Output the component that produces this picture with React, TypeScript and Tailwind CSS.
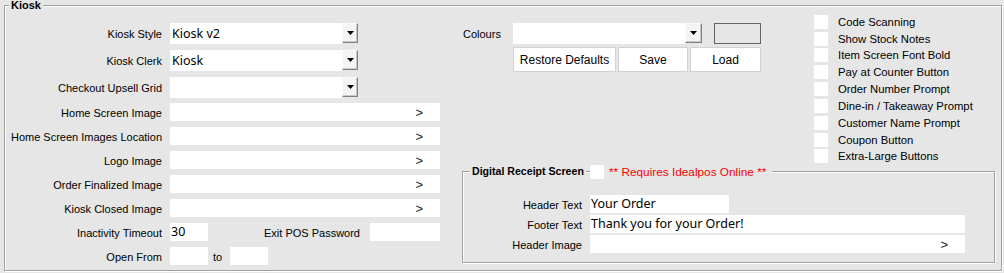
import React from "react";

const LBL = "font-['Liberation_Sans',Arial,sans-serif] text-[11px] leading-none text-black";
const INP = "font-['Noto_Sans',sans-serif] text-[12.5px] leading-none text-black";

function DropBtn({ w }: { w: string }) {
  return (
    <div
      className={`${w} h-[20px] bg-[#f4f4f4] border border-t-[#fcfcfc] border-l-[#fcfcfc] border-r-[#808080] border-b-[#808080] shadow-[inset_-1px_-1px_0_#c8c8c8] flex items-center justify-center`}
    >
      <svg width="7" height="4" viewBox="0 0 7 4">
        <path d="M0 0H7L3.5 4Z" fill="#000" />
      </svg>
    </div>
  );
}

function Select({ value, w, bw }: { value?: string; w: string; bw: string }) {
  return (
    <div className="flex items-start h-[21px]">
      <div className={`${w} h-[21px] bg-white flex items-center pl-[2px] pt-[1px] ${INP}`}>{value}</div>
      <DropBtn w={bw} />
    </div>
  );
}

function PathField({ w }: { w: string }) {
  return (
    <div
      className={`${w} h-[18px] bg-white flex items-center justify-end pr-[17px] font-['Liberation_Sans',sans-serif] text-[13px] leading-none text-[#222]`}
    >
      &gt;
    </div>
  );
}

function Label({ children }: { children: React.ReactNode }) {
  return <div className={`w-[157px] text-right pt-[2px] ${LBL}`}>{children}</div>;
}

function Check({ label, h }: { label: string; h: string }) {
  return (
    <div className={`flex items-start ${h}`}>
      <div className="w-[14px] h-[14px] bg-white" />
      <div className="ml-[10px] h-[14px] flex items-center pt-[1px] font-['Liberation_Sans',Arial,sans-serif] text-[11.3px] leading-none text-black">
        {label}
      </div>
    </div>
  );
}

export default function App() {
  return (
    <div className="w-[1004px] h-[273px] bg-[#e6e6e6] pt-[5px] pl-[4px] overflow-hidden">
      <div className="relative w-[998px] h-[266px] border border-[#a0a0a0] shadow-[1px_1px_0_#ffffff,inset_1px_1px_0_#ffffff] flex">
        <div className="absolute left-[4px] top-[-7px] px-[2px] bg-[#e6e6e6] font-['Liberation_Sans',Arial,sans-serif] text-[11px] leading-[13px] font-bold text-black">
          Kiosk
        </div>

        {/* Left column */}
        <div className="w-[435px] flex flex-col">
          <div className="mt-[17px] flex items-center h-[21px]">
            <Label>Kiosk Style</Label>
            <div className="ml-[8px]">
              <Select value="Kiosk v2" w="w-[172px]" bw="w-[16px]" />
            </div>
          </div>
          <div className="mt-[6px] flex items-center h-[21px]">
            <Label>Kiosk Clerk</Label>
            <div className="ml-[8px]">
              <Select value="Kiosk" w="w-[172px]" bw="w-[16px]" />
            </div>
          </div>
          <div className="mt-[6px] flex items-center h-[21px]">
            <Label>Checkout Upsell Grid</Label>
            <div className="ml-[8px]">
              <Select w="w-[172px]" bw="w-[16px]" />
            </div>
          </div>
          {[
            "Home Screen Image",
            "Home Screen Images Location",
            "Logo Image",
            "Order Finalized Image",
            "Kiosk Closed Image",
          ].map((l, i) => (
            <div key={l} className={`${i === 0 ? "mt-[5px]" : "mt-[6px]"} flex items-center h-[18px]`}>
              <Label>{l}</Label>
              <div className="ml-[8px]">
                <PathField w="w-[270px]" />
              </div>
            </div>
          ))}
          <div className="mt-[6px] flex items-center h-[18px]">
            <Label>Inactivity Timeout</Label>
            <div className={`ml-[8px] w-[38px] h-[18px] bg-white flex items-center pl-[1px] pt-[1px] ${INP}`}>30</div>
            <div className={`w-[152px] text-right pt-[2px] ${LBL}`}>Exit POS Password</div>
            <div className="ml-[10px] w-[70px] h-[18px] bg-white" />
          </div>
          <div className="mt-[6px] flex items-center h-[18px]">
            <Label>Open From</Label>
            <div className="ml-[8px] w-[38px] h-[18px] bg-white" />
            <div className={`ml-[5px] w-[17px] pt-[2px] ${LBL}`}>to</div>
            <div className="w-[38px] h-[18px] bg-white" />
          </div>
        </div>

        {/* Right area */}
        <div className="ml-[22px] flex flex-col pt-[9px]">
          <div className="flex items-start">
            <div className="mt-[8px] flex flex-col w-[299px]">
              <div className="flex items-center h-[21px]">
                <div className={`w-[51px] pl-[1px] pt-[2px] ${LBL}`}>Colours</div>
                <Select w="w-[172px]" bw="w-[17px]" />
                <div className="ml-[12px] w-[47px] h-[21px] border border-[#646464]" />
              </div>
              <div className="mt-[3px] ml-[51px] flex gap-[2px]">
                {[
                  ["Restore Defaults", "w-[103px]"],
                  ["Save", "w-[70px]"],
                  ["Load", "w-[71px]"],
                ].map(([t, w]) => (
                  <div
                    key={t}
                    className={`${w} h-[25px] bg-white border border-[#d2d2d2] flex items-center justify-center font-['Liberation_Sans',Arial,sans-serif] text-[12px] leading-none text-black`}
                  >
                    {t}
                  </div>
                ))}
              </div>
            </div>
            <div className="ml-[53px] flex flex-col">
              <Check label="Code Scanning" h="h-[17px]" />
              <Check label="Show Stock Notes" h="h-[16px]" />
              <Check label="Item Screen Font Bold" h="h-[17px]" />
              <Check label="Pay at Counter Button" h="h-[17px]" />
              <Check label="Order Number Prompt" h="h-[17px]" />
              <Check label="Dine-in / Takeaway Prompt" h="h-[17px]" />
              <Check label="Customer Name Prompt" h="h-[17px]" />
              <Check label="Coupon Button" h="h-[16px]" />
              <Check label="Extra-Large Buttons" h="h-[14px]" />
            </div>
          </div>

          {/* Digital Receipt Screen */}
          <div className="relative mt-[8px] w-[533px] h-[92px] border border-[#a0a0a0] shadow-[1px_1px_0_#ffffff,inset_1px_1px_0_#ffffff] flex flex-col pt-[23px] gap-[2px]">
            <div className="absolute left-[7px] top-[-7px] px-[2px] bg-[#e6e6e6] h-[13px] flex items-center font-['Liberation_Sans',Arial,sans-serif] text-[10.6px] leading-none font-bold text-black">
              Digital Receipt Screen
            </div>
            <div className="absolute left-[127px] top-[-7px] flex items-center bg-[#e6e6e6] pr-[6px]">
              <div className="w-[14px] h-[14px] bg-white" />
              <div className="ml-[5px] pt-[1px] font-['Liberation_Sans',Arial,sans-serif] text-[11.8px] leading-none text-[#ff0000]">
                ** Requires Idealpos Online **
              </div>
            </div>
            <div className="flex items-center h-[18px]">
              <div className={`w-[119px] text-right pt-[2px] ${LBL}`}>Header Text</div>
              <div className={`ml-[8px] w-[139px] h-[18px] bg-white flex items-center pl-[1px] pt-[1px] ${INP}`}>Your Order</div>
            </div>
            <div className="flex items-center h-[18px]">
              <div className={`w-[119px] text-right pt-[2px] ${LBL}`}>Footer Text</div>
              <div className={`ml-[8px] w-[375px] h-[18px] bg-white flex items-center pl-[1px] pt-[1px] ${INP}`}>
                Thank you for your Order!
              </div>
            </div>
            <div className="flex items-center h-[18px]">
              <div className={`w-[119px] text-right pt-[2px] ${LBL}`}>Header Image</div>
              <div className="ml-[8px]">
                <PathField w="w-[375px]" />
              </div>
            </div>
          </div>
        </div>
      </div>
    </div>
  );
}
